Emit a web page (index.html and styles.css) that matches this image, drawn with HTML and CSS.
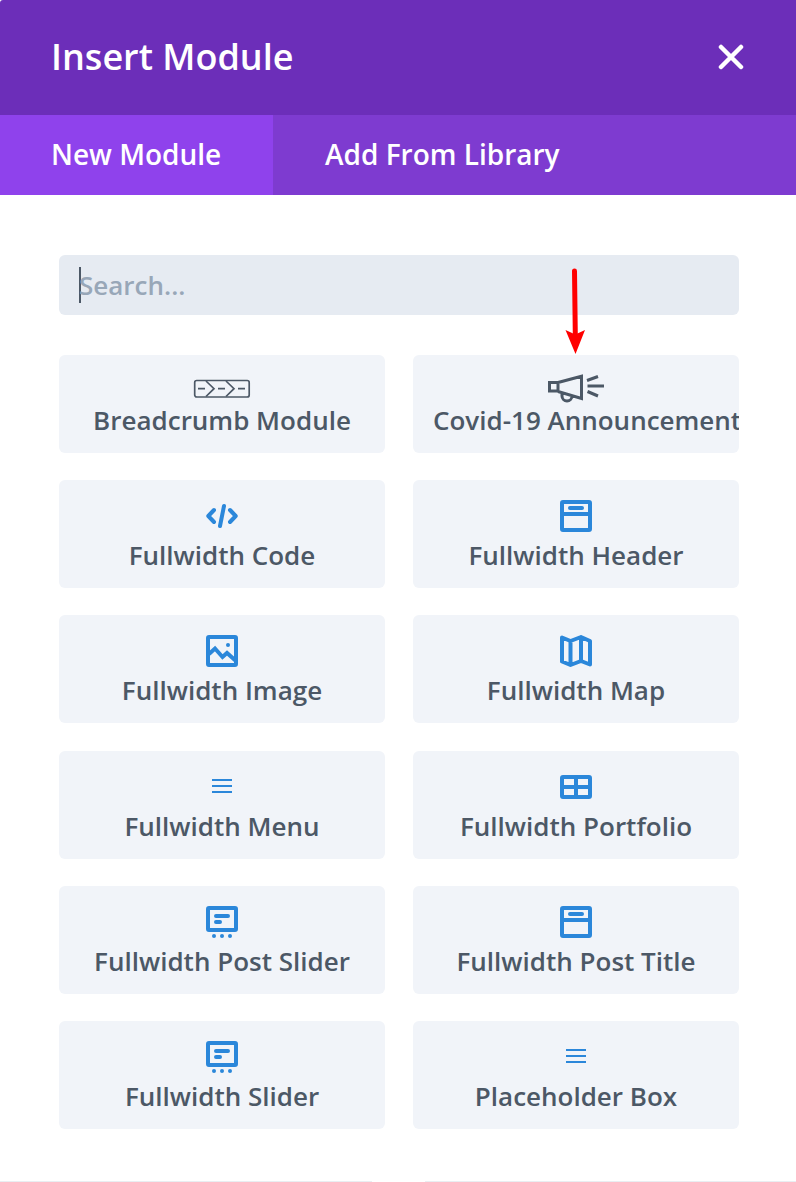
FILE: index.html
```
<!DOCTYPE html>
<html lang="en">
<head>
    <meta charset="utf-8">
    <title>Insert Module</title>
    <link rel="stylesheet" href="styles.css">
</head>
<body>
    <div class="modal">
        <div class="modal-header">
            <h1 class="modal-title">Insert Module</h1>
            <svg class="close" width="26" height="26" viewBox="0 0 26 26"><path d="M3 3L23 23M23 3L3 23"/></svg>
        </div>

        <div class="tabs">
            <div class="tab active">New Module</div>
            <div class="tab">Add From Library</div>
        </div>

        <div class="modal-body">
            <div class="search">
                <span class="caret"></span>
                <span class="placeholder">Search...</span>
                <svg class="arrow" width="22" height="88" viewBox="0 0 22 88"><path class="shaft" d="M10.5 4L11.3 68"/><path class="head" d="M1.5 63L11.3 67.5L21 63L11.5 87Z"/></svg>
            </div>

            <div class="module-list">
                <div class="module short">
                    <svg class="icon dark thin" width="58" height="32" viewBox="0 0 58 32"><rect x="1.7" y="7.5" width="54.5" height="16.5" rx="2"/><path d="M13 8L21 15.7L13 23.5M33 8L41 15.7L33 23.5M5 15.7H12M25 15.7H32M45 15.7H52"/></svg>
                    <span class="label">Breadcrumb Module</span>
                </div>
                <div class="module short">
                    <svg class="icon dark" width="58" height="32" viewBox="0 0 58 32"><path d="M2.5 9.5H11V18H2.5ZM11 9.5L34.5 3.2V25.5L11 18.5M15 20V23A4.7 4.7 0 0 0 25 23M40 7.5L51 3.5M40.5 13H57M40.5 18.5L51 23"/></svg>
                    <span class="label">Covid-19 Announcement</span>
                </div>

                <div class="module">
                    <svg class="icon round" width="32" height="32" viewBox="0 0 32 32"><path d="M8 10L2.3 16L8 22M24 10L29.7 16L24 22M18 6L14 26"/></svg>
                    <span class="label">Fullwidth Code</span>
                </div>
                <div class="module">
                    <svg class="icon" width="32" height="32" viewBox="0 0 32 32"><rect x="2" y="2" width="28" height="28" rx="1"/><path d="M2 14H30"/><path class="cap" d="M10 8H22"/></svg>
                    <span class="label">Fullwidth Header</span>
                </div>

                <div class="module">
                    <svg class="icon" width="32" height="32" viewBox="0 0 32 32"><rect x="2" y="2" width="28" height="28" rx="1"/><path d="M3 19L9 13.5L16.5 22L21 18L30 26"/><circle class="dot" cx="22" cy="10" r="2"/></svg>
                    <span class="label">Fullwidth Image</span>
                </div>
                <div class="module">
                    <svg class="icon round" width="32" height="32" viewBox="0 0 32 32"><path d="M2 2.5L10.5 6L21 2L30 6V29.5L21 26L10.5 30L2 26.5ZM10.5 6V30M21 2V26"/></svg>
                    <span class="label">Fullwidth Map</span>
                </div>

                <div class="module">
                    <svg class="icon thin" width="32" height="32" viewBox="0 0 32 32"><path d="M6 9H26M6 15H26M6 21H26"/></svg>
                    <span class="label">Fullwidth Menu</span>
                </div>
                <div class="module">
                    <svg class="icon" width="32" height="32" viewBox="0 0 32 32"><rect x="2" y="6" width="28" height="20" rx="1"/><path d="M2 16H30M16 6V26"/></svg>
                    <span class="label">Fullwidth Portfolio</span>
                </div>

                <div class="module">
                    <svg class="icon" width="32" height="32" viewBox="0 0 32 32"><rect x="2" y="2" width="28" height="22" rx="1"/><path class="cap" d="M10 10H22M10 16H14"/><circle class="dot" cx="8" cy="30" r="2"/><circle class="dot" cx="16" cy="30" r="2"/><circle class="dot" cx="24" cy="30" r="2"/></svg>
                    <span class="label">Fullwidth Post Slider</span>
                </div>
                <div class="module">
                    <svg class="icon" width="32" height="32" viewBox="0 0 32 32"><rect x="2" y="2" width="28" height="28" rx="1"/><path d="M2 14H30"/><path class="cap" d="M10 8H22"/></svg>
                    <span class="label">Fullwidth Post Title</span>
                </div>

                <div class="module">
                    <svg class="icon" width="32" height="32" viewBox="0 0 32 32"><rect x="2" y="2" width="28" height="22" rx="1"/><path class="cap" d="M10 10H22M10 16H14"/><circle class="dot" cx="8" cy="30" r="2"/><circle class="dot" cx="16" cy="30" r="2"/><circle class="dot" cx="24" cy="30" r="2"/></svg>
                    <span class="label">Fullwidth Slider</span>
                </div>
                <div class="module">
                    <svg class="icon thin" width="32" height="32" viewBox="0 0 32 32"><path d="M6 9H26M6 15H26M6 21H26"/></svg>
                    <span class="label">Placeholder Box</span>
                </div>
            </div>
        </div>

        <div class="modal-bottom">
            <div class="edge edge-left"></div>
            <div class="edge edge-right"></div>
        </div>
    </div>
</body>
</html>
```
FILE: styles.css
```
* {
    box-sizing: border-box;
}

body {
    margin: 0;
    background-color: #fff;
    font-family: "Open Sans", sans-serif;
    font-weight: 600;
    color: #4c5866;
}

.modal {
    display: flex;
    flex-direction: column;
    height: 1182px;
    overflow: hidden;
}

.modal-header {
    display: flex;
    align-items: center;
    justify-content: space-between;
    height: 115px;
    padding: 0 52px 2px 51px;
    background-color: #6c2eb9;
    border-top-left-radius: 3px;
}

.modal-title {
    margin: 0;
    font-size: 36px;
    font-weight: 600;
    line-height: 50px;
    color: #fff;
}

.close {
    fill: none;
    stroke: #fff;
    stroke-width: 4.5;
    stroke-linecap: round;
}

.tabs {
    display: flex;
    height: 80px;
    background-color: #7e3bd0;
}

.tab {
    padding: 0 52px;
    font-size: 28px;
    line-height: 79px;
    color: #fff;
}

.tab.active {
    width: 273px;
    padding: 0 0 0 51px;
    background-color: #8f42ec;
}

.modal-body {
    flex: 1;
    padding: 60px 57px 0 59px;
}

.search {
    position: relative;
    display: flex;
    align-items: center;
    height: 60px;
    margin-bottom: 40px;
    padding-left: 20px;
    background-color: #e6ebf2;
    border-radius: 6px;
}

.caret {
    width: 2px;
    height: 36px;
    margin-right: -2px;
    background-color: #4c5866;
}

.placeholder {
    font-size: 26px;
    color: #98a7b8;
}

/* points at the announcement module */
.arrow {
    position: absolute;
    left: 505px;
    top: 12px;
}

.shaft {
    stroke: #f00;
    stroke-width: 5;
    stroke-linecap: round;
}

.head {
    fill: #f00;
}

.module-list {
    display: grid;
    grid-template-columns: 326px 326px;
    gap: 27.2px 28px;
}

.module {
    display: flex;
    flex-direction: column;
    align-items: center;
    height: 108px;
    padding: 20px 20px 0;
    overflow: hidden;
    background-color: #f1f4f9;
    border-radius: 6px;
}

.module.short {
    height: 98px;
    padding-top: 18px;
}

.label {
    width: 100%;
    margin-top: 5px;
    font-size: 26px;
    line-height: 36px;
    text-align: center;
    white-space: nowrap;
}

.module.short .label {
    margin-top: -3px;
}

.icon {
    flex: none;
    fill: none;
    stroke: #2b87da;
    stroke-width: 4;
}

.icon.thin {
    stroke-width: 2;
}

.icon.dark {
    stroke: #4c5866;
    stroke-width: 3;
}

.icon.dark.thin {
    stroke-width: 1.7;
}

.icon.round {
    stroke-linecap: round;
    stroke-linejoin: round;
}

.icon .cap {
    stroke-linecap: round;
}

.icon .dot {
    fill: #2b87da;
    stroke: none;
}

.modal-bottom {
    display: flex;
    justify-content: space-between;
}

.edge {
    height: 1px;
    background-color: #e9eef2;
}

.edge-left {
    width: 372px;
}

.edge-right {
    width: 371px;
}
```
